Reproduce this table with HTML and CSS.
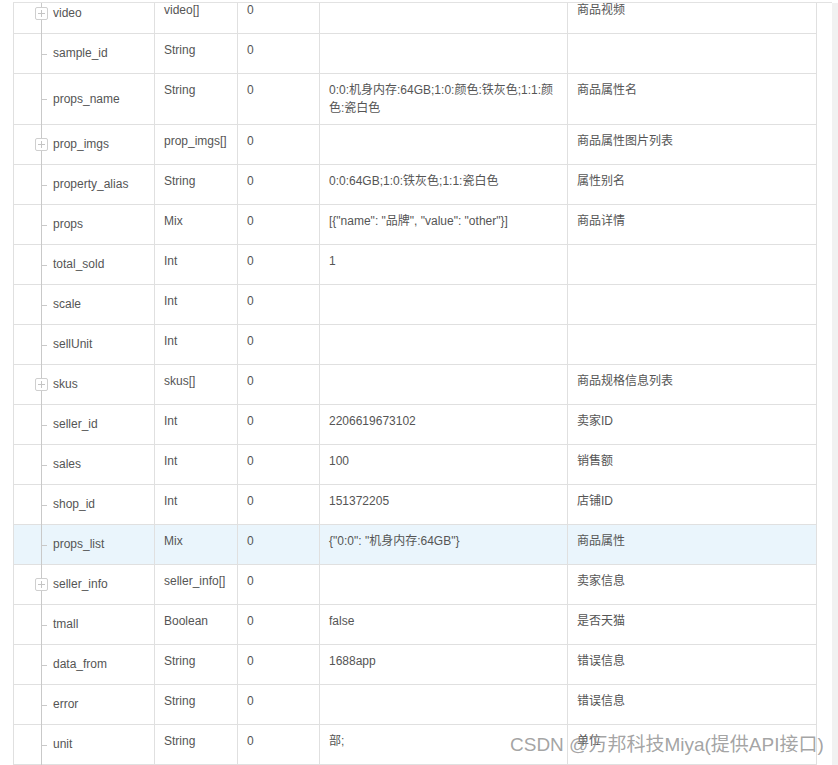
FILE: index.html
```html
<!DOCTYPE html>
<html lang="zh-CN">
<head>
<meta charset="utf-8">
<title>API 字段表</title>
<link rel="stylesheet" href="styles.css">
</head>
<body>
<div class="viewport">
  <div class="frame">
    <div class="table">
      <div class="row">
        <div class="cell name"><span class="toggle"></span>video</div>
        <div class="cell">video[]</div>
        <div class="cell">0</div>
        <div class="cell"></div>
        <div class="cell">商品视频</div>
      </div>
      <div class="row">
        <div class="cell name leaf">sample_id</div>
        <div class="cell">String</div>
        <div class="cell">0</div>
        <div class="cell"></div>
        <div class="cell"></div>
      </div>
      <div class="row">
        <div class="cell name leaf">props_name</div>
        <div class="cell">String</div>
        <div class="cell">0</div>
        <div class="cell">0:0:机身内存:64GB;1:0:颜色:铁灰色;1:1:颜色:瓷白色</div>
        <div class="cell">商品属性名</div>
      </div>
      <div class="row">
        <div class="cell name"><span class="toggle"></span>prop_imgs</div>
        <div class="cell">prop_imgs[]</div>
        <div class="cell">0</div>
        <div class="cell"></div>
        <div class="cell">商品属性图片列表</div>
      </div>
      <div class="row">
        <div class="cell name leaf">property_alias</div>
        <div class="cell">String</div>
        <div class="cell">0</div>
        <div class="cell">0:0:64GB;1:0:铁灰色;1:1:瓷白色</div>
        <div class="cell">属性别名</div>
      </div>
      <div class="row">
        <div class="cell name leaf">props</div>
        <div class="cell">Mix</div>
        <div class="cell">0</div>
        <div class="cell">[{"name": "品牌", "value": "other"}]</div>
        <div class="cell">商品详情</div>
      </div>
      <div class="row">
        <div class="cell name leaf">total_sold</div>
        <div class="cell">Int</div>
        <div class="cell">0</div>
        <div class="cell">1</div>
        <div class="cell"></div>
      </div>
      <div class="row">
        <div class="cell name leaf">scale</div>
        <div class="cell">Int</div>
        <div class="cell">0</div>
        <div class="cell"></div>
        <div class="cell"></div>
      </div>
      <div class="row">
        <div class="cell name leaf">sellUnit</div>
        <div class="cell">Int</div>
        <div class="cell">0</div>
        <div class="cell"></div>
        <div class="cell"></div>
      </div>
      <div class="row">
        <div class="cell name"><span class="toggle"></span>skus</div>
        <div class="cell">skus[]</div>
        <div class="cell">0</div>
        <div class="cell"></div>
        <div class="cell">商品规格信息列表</div>
      </div>
      <div class="row">
        <div class="cell name leaf">seller_id</div>
        <div class="cell">Int</div>
        <div class="cell">0</div>
        <div class="cell">2206619673102</div>
        <div class="cell">卖家ID</div>
      </div>
      <div class="row">
        <div class="cell name leaf">sales</div>
        <div class="cell">Int</div>
        <div class="cell">0</div>
        <div class="cell">100</div>
        <div class="cell">销售额</div>
      </div>
      <div class="row">
        <div class="cell name leaf">shop_id</div>
        <div class="cell">Int</div>
        <div class="cell">0</div>
        <div class="cell">151372205</div>
        <div class="cell">店铺ID</div>
      </div>
      <div class="row hover">
        <div class="cell name leaf">props_list</div>
        <div class="cell">Mix</div>
        <div class="cell">0</div>
        <div class="cell">{"0:0": "机身内存:64GB"}</div>
        <div class="cell">商品属性</div>
      </div>
      <div class="row">
        <div class="cell name"><span class="toggle"></span>seller_info</div>
        <div class="cell">seller_info[]</div>
        <div class="cell">0</div>
        <div class="cell"></div>
        <div class="cell">卖家信息</div>
      </div>
      <div class="row">
        <div class="cell name leaf">tmall</div>
        <div class="cell">Boolean</div>
        <div class="cell">0</div>
        <div class="cell">false</div>
        <div class="cell">是否天猫</div>
      </div>
      <div class="row">
        <div class="cell name leaf">data_from</div>
        <div class="cell">String</div>
        <div class="cell">0</div>
        <div class="cell">1688app</div>
        <div class="cell">错误信息</div>
      </div>
      <div class="row">
        <div class="cell name leaf">error</div>
        <div class="cell">String</div>
        <div class="cell">0</div>
        <div class="cell"></div>
        <div class="cell">错误信息</div>
      </div>
      <div class="row">
        <div class="cell name leaf">unit</div>
        <div class="cell">String</div>
        <div class="cell">0</div>
        <div class="cell">部;</div>
        <div class="cell">单位</div>
      </div>
    </div>
  </div>
  <div class="track"></div>
</div>
<div class="watermark">CSDN @万邦科技Miya(提供API接口)</div>
</body>
</html>
```

FILE: styles.css
```css
html, body {
  margin: 0;
  padding: 0;
  background: #ffffff;
}

body {
  font-family: "Liberation Sans", Arial, "Noto Sans CJK SC", sans-serif;
  font-size: 12px;
  line-height: 18px;
  color: #555555;
  position: relative;
  width: 838px;
  height: 765px;
  overflow: hidden;
}

.viewport {
  display: flex;
  height: 765px;
}

.frame {
  flex: 1;
  margin-left: 13px;
  margin-top: 2px;
  border-top: 1px solid #e2e2e2;
  overflow: hidden;
}

.track {
  width: 6px;
  margin-top: 3px;
  background: #f1f1f1;
}

.table {
  width: 803px;
  margin-top: -9px;
  border-left: 1px solid #e0e0e0;
}

.row {
  display: grid;
  grid-template-columns: 141px 83px 82px 248px 249px;
  min-height: 39px;
  border-bottom: 1px solid #e0e0e0;
}

.row.hover {
  background: #eaf5fc;
}

.cell {
  border-right: 1px solid #e0e0e0;
  padding: 7px 9px;
  word-break: break-all;
}

.cell.name {
  position: relative;
  display: flex;
  align-items: center;
  padding: 0 4px 1px 39px;
}

.cell.name::before {
  content: "";
  position: absolute;
  left: 27px;
  top: 0;
  bottom: -1px;
  width: 1px;
  background: #c9c9c9;
}

.cell.leaf::after {
  content: "";
  position: absolute;
  left: 28px;
  top: 50%;
  width: 5px;
  height: 1px;
  background: #c9c9c9;
}

.toggle {
  position: absolute;
  left: 21px;
  top: 50%;
  margin-top: -7px;
  width: 11px;
  height: 11px;
  border: 1px solid #cfcfcf;
  border-radius: 2px;
  background: #ffffff;
  z-index: 1;
}

.toggle::before,
.toggle::after {
  content: "";
  position: absolute;
  background: #c4c4c4;
}

.toggle::before {
  left: 2px;
  right: 2px;
  top: 5px;
  height: 1px;
}

.toggle::after {
  top: 2px;
  bottom: 2px;
  left: 5px;
  width: 1px;
}

.watermark {
  position: absolute;
  left: 510px;
  top: 734px;
  font-size: 19px;
  line-height: 22px;
  color: rgba(140, 140, 140, 0.8);
  white-space: nowrap;
}
```
